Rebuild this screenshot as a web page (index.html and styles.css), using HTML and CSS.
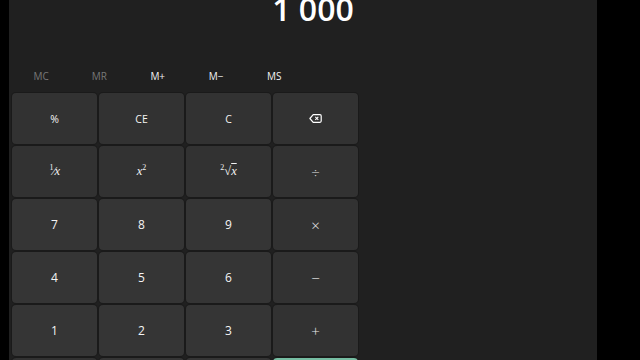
FILE: index.html
```html
<!DOCTYPE html>
<html>
<head>
<meta charset="utf-8">
<link rel="stylesheet" href="styles.css">
</head>
<body>
<div class="screen">
  <div class="edge-left"></div>
  <div class="app">
    <div class="display"><span class="value">1 000</span></div>
    <div class="memory">
      <span class="mem off">MC</span>
      <span class="mem off">MR</span>
      <span class="mem">M+</span>
      <span class="mem">M−</span>
      <span class="mem">MS</span>
    </div>
    <div class="keys">
      <div class="key">%</div>
      <div class="key">CE</div>
      <div class="key">C</div>
      <div class="key"><svg width="13" height="9" viewBox="0 0 13 9"><path d="M4.2 0.7 H11 a1.2 1.2 0 0 1 1.2 1.2 V7.1 a1.2 1.2 0 0 1 -1.2 1.2 H4.2 L0.9 4.5 Z" fill="none" stroke="#fff" stroke-width="1.2" stroke-linejoin="round"/><path d="M6.3 2.8 L9.3 5.8 M9.3 2.8 L6.3 5.8" stroke="#fff" stroke-width="1.1"/></svg></div>
      <div class="key math"><span class="fr"><sup>1</sup>⁄<i>x</i></span></div>
      <div class="key math"><span><i>x</i><sup>2</sup></span></div>
      <div class="key math"><span><sup class="idx">2</sup>√<i class="rad">x</i></span></div>
      <div class="key op">÷</div>
      <div class="key num">7</div>
      <div class="key num">8</div>
      <div class="key num">9</div>
      <div class="key op">×</div>
      <div class="key num">4</div>
      <div class="key num">5</div>
      <div class="key num">6</div>
      <div class="key op">−</div>
      <div class="key num">1</div>
      <div class="key num">2</div>
      <div class="key num">3</div>
      <div class="key op">+</div>
      <div class="key">+/−</div>
      <div class="key num">0</div>
      <div class="key num">.</div>
      <div class="key equals">=</div>
    </div>
  </div>
</div>
</body>
</html>
```
FILE: styles.css
```css
html, body {
  margin: 0;
  padding: 0;
  background: #000;
  overflow: hidden;
  width: 640px;
  height: 360px;
}
.screen {
  display: flex;
  height: 360px;
  font-family: "Open Sans", "Noto Sans", sans-serif;
  color: #fff;
}
.edge-left {
  width: 9px;
  flex: none;
  background: #000;
}
.app {
  width: 588px;
  flex: none;
  background: #202020;
  padding-left: 3px;
  box-sizing: border-box;
  overflow: hidden;
}
.display {
  height: 62px;
  text-align: center;
  padding-left: 17px;
  overflow: hidden;
}
.value {
  display: block;
  font-size: 32px;
  font-weight: 600;
  line-height: 32px;
  margin-top: -7px;
  letter-spacing: 0;
}
.memory {
  display: flex;
  height: 29px;
  align-items: center;
}
.mem {
  width: 58.3px;
  text-align: center;
  font-size: 10px;
  font-weight: 500;
  color: #f2f2f2;
  margin-top: -2px;
}
.mem.off {
  color: #777;
}
.keys {
  display: grid;
  grid-template-columns: repeat(4, 85px);
  grid-auto-rows: 51px;
  gap: 2px;
  margin-top: 2px;
}
.key {
  background: #323232;
  border-radius: 4px;
  box-shadow: 0 0 0 1px #1a1a1a;
  display: flex;
  align-items: center;
  justify-content: center;
  font-size: 10.5px;
  font-weight: 500;
  color: #f4f4f4;
}
.key.num {
  font-size: 12px;
  background: #353535;
}
.key.op {
  font-size: 15px;
  font-weight: 300;
  color: #e8e8e8;
}
.key.math {
  font-family: "Liberation Serif", "DejaVu Serif", serif;
  font-size: 12.5px;
}
.key.math sup {
  font-size: 8px;
  vertical-align: 5px;
  line-height: 0;
}
.fr {
  letter-spacing: -0.5px;
}
.fr sup {
  font-size: 7px;
  vertical-align: 3px;
}
.key.math i {
  font-style: italic;
}
.idx {
  margin-right: 0;
}
.rad {
  text-decoration: overline;
}
.key.equals {
  background: #76bda2;
  color: #000;
  font-size: 16px;
}
```
